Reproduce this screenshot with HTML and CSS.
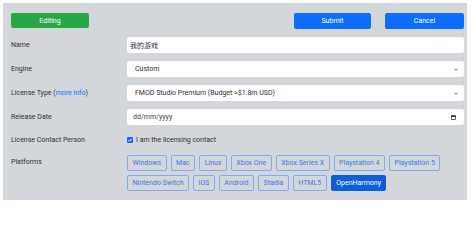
FILE: index.html
```html
<!DOCTYPE html>
<html>
<head>
<meta charset="utf-8">
<link rel="stylesheet" href="styles.css">
</head>
<body>
<div class="panel">
  <div class="header">
    <button class="btn btn-success">Editing</button>
    <div class="actions">
      <button class="btn btn-primary btn-submit">Submit</button>
      <button class="btn btn-primary btn-cancel">Cancel</button>
    </div>
  </div>
  <div class="form">
    <div class="label">Name</div>
    <div class="control"><div class="input">我的游戏</div></div>

    <div class="label">Engine</div>
    <div class="control"><div class="input select"><span>Custom</span>
      <svg class="chev" viewBox="0 0 8 5" width="4" height="3"><path d="M1 1l3 3 3-3" fill="none" stroke="#343a40" stroke-width="1.6"/></svg></div></div>

    <div class="label">License Type (<span class="link">more info</span>)</div>
    <div class="control"><div class="input select"><span>FMOD Studio Premium (Budget &gt;$1.8m USD)</span>
      <svg class="chev" viewBox="0 0 8 5" width="4" height="3"><path d="M1 1l3 3 3-3" fill="none" stroke="#343a40" stroke-width="1.6"/></svg></div></div>

    <div class="label">Release Date</div>
    <div class="control"><div class="input select date"><span>dd/mm/yyyy</span>
      <svg class="cal" viewBox="0 0 10 10" width="5" height="5"><rect x="1" y="1.5" width="8" height="7.5" fill="none" stroke="#111" stroke-width="1.3"/><rect x="1" y="1.5" width="8" height="2.2" fill="#111"/></svg></div></div>

    <div class="label">License Contact Person</div>
    <div class="control check-row">
      <span class="checkbox"><svg viewBox="0 0 10 10" width="6" height="6"><path d="M2.3 5.2l1.9 1.9 3.6-4" fill="none" stroke="#fff" stroke-width="1.6"/></svg></span>
      <span>I am the licensing contact</span>
    </div>

    <div class="label label-top">Platforms</div>
    <div class="control platforms">
      <button class="chip">Windows</button>
      <button class="chip">Mac</button>
      <button class="chip">Linux</button>
      <button class="chip">Xbox One</button>
      <button class="chip">Xbox Series X</button>
      <button class="chip">Playstation 4</button>
      <button class="chip">Playstation 5</button>
      <button class="chip">Nintendo Switch</button>
      <button class="chip">iOS</button>
      <button class="chip">Android</button>
      <button class="chip">Stadia</button>
      <button class="chip">HTML5</button>
      <button class="chip chip-active">OpenHarmony</button>
    </div>
  </div>
</div>
</body>
</html>
```

FILE: styles.css
```css
html, body {
  margin: 0;
  padding: 0;
  background: #ffffff;
}
body {
  font-family: "Roboto", "Noto Sans CJK SC", sans-serif;
  font-size: 7px;
  color: #2b2f33;
}
.panel {
  margin: 3px 7px 0 3px;
  height: 197px;
  box-sizing: border-box;
  background: #d3d7dc;
  padding: 10px 3px 0 8px;
}
.header {
  display: flex;
  justify-content: space-between;
  height: 16px;
}
.btn {
  font-family: inherit;
  font-size: 7px;
  border: 0;
  border-radius: 2px;
  color: #fff;
  padding: 0;
  height: 16px;
  margin: 0;
}
.btn-success {
  background: #28a745;
  width: 78px;
  height: 15px;
}
.btn-primary {
  background: #0d6efd;
}
.actions {
  display: flex;
  gap: 14px;
}
.btn-submit { width: 77px; }
.btn-cancel { width: 79px; }
.form {
  display: grid;
  grid-template-columns: 116px 1fr;
  grid-auto-rows: auto;
  row-gap: 8px;
  margin-top: 8px;
}
.label {
  display: flex;
  align-items: center;
  min-height: 14px;
}
.label-top {
  align-items: flex-start;
  padding-top: 3px;
}
.link { color: #0d6efd; }
.input {
  height: 16px;
  background: #fff;
  border-radius: 2px;
  display: flex;
  align-items: center;
  padding: 0 5px 0 3px;
  box-sizing: border-box;
}
.select {
  justify-content: space-between;
  padding-left: 8px;
}
.select.date { padding-left: 6px; padding-right: 8px; color: #444; }
.chev { margin-right: 1px; }
.check-row {
  display: flex;
  align-items: center;
  gap: 3px;
  height: 14px;
}
.checkbox {
  width: 6px;
  height: 6px;
  background: #0d6efd;
  border-radius: 1px;
  display: flex;
}
.platforms {
  display: flex;
  flex-wrap: wrap;
  gap: 4px 4px;
}
.chip {
  font-family: inherit;
  font-size: 7px;
  height: 16px;
  padding: 0 4.5px;
  margin: 0;
  background: transparent;
  border: 1px solid #80aaee;
  border-radius: 2px;
  color: #3a78e2;
}
.chip-active {
  background: #0b5ed7;
  border-color: #0b5ed7;
  color: #fff;
}
```
